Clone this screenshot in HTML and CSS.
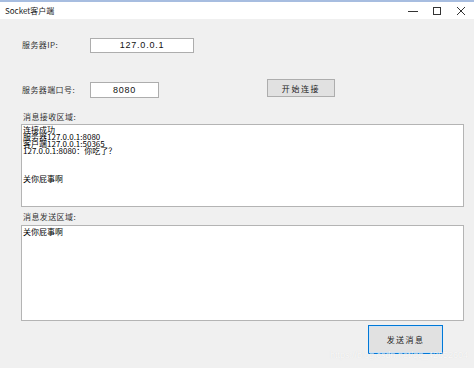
FILE: index.html
```html
<!DOCTYPE html>
<html lang="zh-CN">
<head>
<meta charset="utf-8">
<title>Socket客户端</title>
<link rel="stylesheet" href="styles.css">
</head>
<body>
<div class="window">
  <div class="titlebar">
    <span class="title">Socket客户端</span>
    <div class="controls">
      <svg class="ctl" width="10" height="10" viewBox="0 0 10 10"><line x1="0" y1="5.5" x2="10" y2="5.5" stroke="#333" stroke-width="1"/></svg>
      <svg class="ctl" width="10" height="10" viewBox="0 0 10 10"><rect x="1.5" y="1.5" width="7" height="7" fill="none" stroke="#333" stroke-width="1"/></svg>
      <svg class="ctl" width="10" height="10" viewBox="0 0 10 10"><path d="M1 1 L9 9 M9 1 L1 9" stroke="#333" stroke-width="1"/></svg>
    </div>
  </div>
  <div class="client">
    <div class="row row-ip">
      <span class="label">服务器IP:</span>
      <div class="input input-ip">127.0.0.1</div>
    </div>
    <div class="row row-port">
      <span class="label">服务器端口号:</span>
      <div class="input input-port">8080</div>
      <div class="btn btn-connect">开始连接</div>
    </div>
    <div class="section-label recv-label">消息接收区域:</div>
    <div class="textbox recv-box">
      <div class="line">连接成功</div>
      <div class="line">服务器127.0.0.1:8080</div>
      <div class="line">客户端127.0.0.1:50365</div>
      <div class="line">127.0.0.1:8080：你吃了？</div>
      <div class="line">&nbsp;</div>
      <div class="line">&nbsp;</div>
      <div class="line">&nbsp;</div>
      <div class="line">关你屁事啊</div>
    </div>
    <div class="section-label send-label">消息发送区域:</div>
    <div class="textbox send-box">
      <div class="line">关你屁事啊</div>
    </div>
    <div class="footer">
      <div class="btn btn-send">发送消息</div>
    </div>
  </div>
  <div class="watermark">https://blog.csdn.net/qq_42852604</div>
</div>
</body>
</html>
```

FILE: styles.css
```css
* { box-sizing: border-box; }
html, body {
  margin: 0;
  padding: 0;
  width: 474px;
  height: 368px;
  overflow: hidden;
  background: #f0f0f0;
}
.window {
  position: relative;
  width: 474px;
  height: 368px;
  background: #f0f0f0;
  font-family: "Noto Sans CJK SC", "DejaVu Sans", sans-serif;
  color: #000;
}
.titlebar {
  height: 19px;
  background: #fff;
  border-top: 2px solid #a7bde0;
  display: flex;
  align-items: center;
  justify-content: space-between;
  padding-left: 5px;
}
.title {
  font-family: "Noto Sans CJK SC", "Liberation Sans", sans-serif;
  font-size: 8px;
  color: #222;
  line-height: 10px;
}
.controls {
  display: flex;
  align-items: center;
  gap: 14px;
  padding-right: 8px;
}
.ctl { display: block; }
.client {
  padding: 19px 10px 0 22px;
}
.row {
  display: flex;
  align-items: flex-start;
}
.label {
  width: 68px;
  font-size: 8px;
  letter-spacing: 0.4px;
  color: #333;
  line-height: 10px;
}
.row-ip .label { margin-top: 2px; }
.input {
  background: #fff;
  border: 1px solid #adadad;
  font-family: "Liberation Sans", "DejaVu Sans", sans-serif;
  font-size: 9px;
  letter-spacing: 0.8px;
  text-align: center;
  color: #111;
}
.input-ip {
  width: 104px;
  height: 15px;
  line-height: 13px;
}
.row-port {
  margin-top: 26px;
}
.row-port .label { margin-top: 6px; }
.input-port {
  width: 69px;
  height: 16px;
  line-height: 14px;
  margin-top: 3px;
}
.btn {
  background: #e1e1e1;
  border: 1px solid #adadad;
  font-size: 8px;
  letter-spacing: 1.6px;
  color: #222;
  display: flex;
  align-items: center;
  justify-content: center;
}
.btn-connect {
  margin-left: 108px;
  width: 68px;
  height: 18px;
}
.section-label {
  font-size: 8px;
  letter-spacing: 0.4px;
  color: #333;
  line-height: 10px;
  margin-left: 1px;
}
.recv-label { margin-top: 14px; }
.textbox {
  background: #fff;
  border: 1px solid #b4b4b4;
  margin-left: -1px;
  padding: 1px 1px;
  color: #000;
}
.recv-box {
  margin-top: 2px;
  height: 83px;
}
.send-label { margin-top: 5px; }
.send-box {
  margin-top: 3px;
  height: 96px;
  padding-top: 2px;
}
.line {
  white-space: nowrap;
  font-family: "Noto Sans CJK SC", "DejaVu Sans", sans-serif;
  font-size: 8px;
  line-height: 7px;
  height: 7px;
}
.footer {
  display: flex;
  justify-content: flex-end;
  padding-right: 21px;
  margin-top: 4px;
}
.btn-send {
  width: 75px;
  height: 29px;
  border: 1px solid #0078d7;
  box-shadow: inset 0 0 0 1px #cfe3f5;
  letter-spacing: 1.4px;
}
.watermark {
  position: absolute;
  right: 6px;
  bottom: 8px;
  font-family: "Liberation Sans", sans-serif;
  font-size: 9px;
  color: rgba(255,255,255,0.8);
  text-shadow: 0 0 1px rgba(0,0,0,0.1);
}
```
